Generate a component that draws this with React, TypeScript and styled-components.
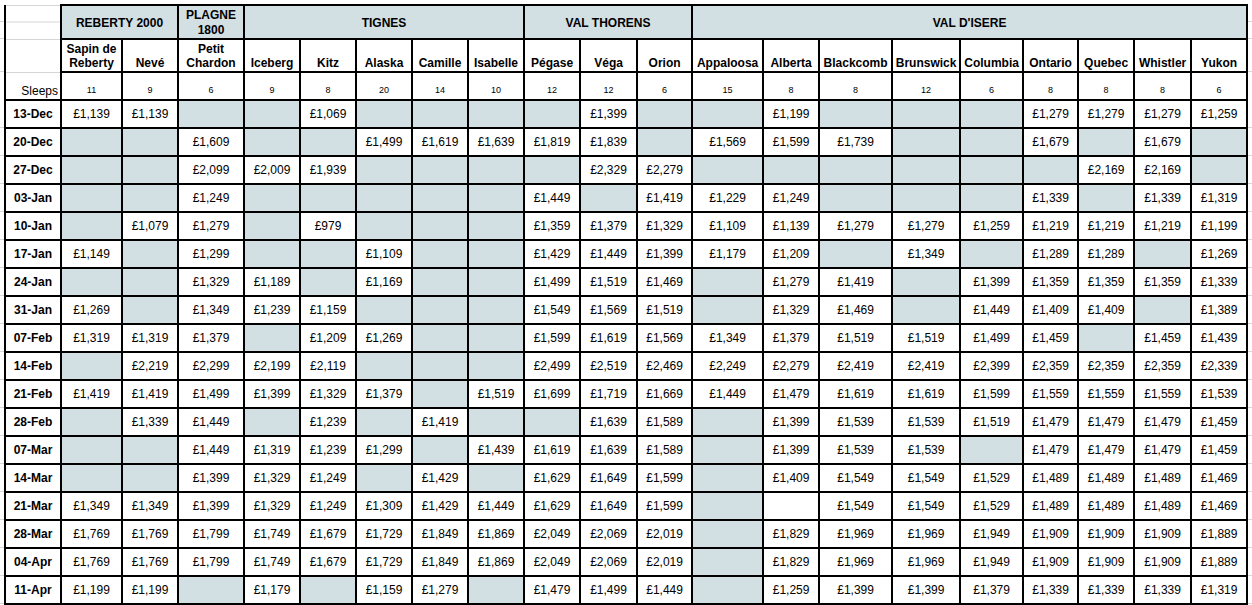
import React from "react";
import styled, { createGlobalStyle } from "styled-components";

const FILL = "#d2dfe3";
const GRID = "#d6d6d6";

const GlobalStyle = createGlobalStyle`
  html, body {
    margin: 0;
    padding: 0;
    background: #fff;
  }
  body {
    font-family: "Liberation Sans", Arial, sans-serif;
    color: #000;
  }
`;

interface Group {
  name: string;
  span: number;
}

interface Chalet {
  name: string;
  sleeps: number;
}

const groups: Group[] = [
  { name: "REBERTY 2000", span: 2 },
  { name: "PLAGNE\n1800", span: 1 },
  { name: "TIGNES", span: 5 },
  { name: "VAL THORENS", span: 3 },
  { name: "VAL D'ISERE", span: 9 },
];

const chalets: Chalet[] = [
  { name: "Sapin de\nReberty", sleeps: 11 },
  { name: "Nevé", sleeps: 9 },
  { name: "Petit\nChardon", sleeps: 6 },
  { name: "Iceberg", sleeps: 9 },
  { name: "Kitz", sleeps: 8 },
  { name: "Alaska", sleeps: 20 },
  { name: "Camille", sleeps: 14 },
  { name: "Isabelle", sleeps: 10 },
  { name: "Pégase", sleeps: 12 },
  { name: "Véga", sleeps: 12 },
  { name: "Orion", sleeps: 6 },
  { name: "Appaloosa", sleeps: 15 },
  { name: "Alberta", sleeps: 8 },
  { name: "Blackcomb", sleeps: 8 },
  { name: "Brunswick", sleeps: 12 },
  { name: "Columbia", sleeps: 6 },
  { name: "Ontario", sleeps: 8 },
  { name: "Quebec", sleeps: 8 },
  { name: "Whistler", sleeps: 8 },
  { name: "Yukon", sleeps: 6 },
];

// width of each column, date column first
const widths = [56, 61, 56, 66, 56, 56, 56, 56, 56, 56, 57, 55, 71, 56, 73, 68, 63, 55, 56, 57, 56];

// 0 = not available (shaded), -1 = blank cell left white
const weeks: [string, number[]][] = [
  ["13-Dec", [1139, 1139, 0, 0, 1069, 0, 0, 0, 0, 1399, 0, 0, 1199, 0, 0, 0, 1279, 1279, 1279, 1259]],
  ["20-Dec", [0, 0, 1609, 0, 0, 1499, 1619, 1639, 1819, 1839, 0, 1569, 1599, 1739, 0, 0, 1679, 0, 1679, 0]],
  ["27-Dec", [0, 0, 2099, 2009, 1939, 0, 0, 0, 0, 2329, 2279, 0, 0, 0, 0, 0, 0, 2169, 2169, 0]],
  ["03-Jan", [0, 0, 1249, 0, 0, 0, 0, 0, 1449, 0, 1419, 1229, 1249, 0, 0, 0, 1339, 0, 1339, 1319]],
  ["10-Jan", [0, 1079, 1279, 0, 979, 0, 0, 0, 1359, 1379, 1329, 1109, 1139, 1279, 1279, 1259, 1219, 1219, 1219, 1199]],
  ["17-Jan", [1149, 0, 1299, 0, 0, 1109, 0, 0, 1429, 1449, 1399, 1179, 1209, 0, 1349, 0, 1289, 1289, 0, 1269]],
  ["24-Jan", [0, 0, 1329, 1189, 0, 1169, 0, 0, 1499, 1519, 1469, 0, 1279, 1419, 0, 1399, 1359, 1359, 1359, 1339]],
  ["31-Jan", [1269, 0, 1349, 1239, 1159, 0, 0, 0, 1549, 1569, 1519, 0, 1329, 1469, 0, 1449, 1409, 1409, 0, 1389]],
  ["07-Feb", [1319, 1319, 1379, 0, 1209, 1269, 0, 0, 1599, 1619, 1569, 1349, 1379, 1519, 1519, 1499, 1459, 0, 1459, 1439]],
  ["14-Feb", [0, 2219, 2299, 2199, 2119, 0, 0, 0, 2499, 2519, 2469, 2249, 2279, 2419, 2419, 2399, 2359, 2359, 2359, 2339]],
  ["21-Feb", [1419, 1419, 1499, 1399, 1329, 1379, 0, 1519, 1699, 1719, 1669, 1449, 1479, 1619, 1619, 1599, 1559, 1559, 1559, 1539]],
  ["28-Feb", [0, 1339, 1449, 0, 1239, 0, 1419, 0, 0, 1639, 1589, 0, 1399, 1539, 1539, 1519, 1479, 1479, 1479, 1459]],
  ["07-Mar", [0, 0, 1449, 1319, 1239, 1299, 0, 1439, 1619, 1639, 1589, 0, 1399, 1539, 1539, 0, 1479, 1479, 1479, 1459]],
  ["14-Mar", [0, 0, 1399, 1329, 1249, 0, 1429, 0, 1629, 1649, 1599, 0, 1409, 1549, 1549, 1529, 1489, 1489, 1489, 1469]],
  ["21-Mar", [1349, 1349, 1399, 1329, 1249, 1309, 1429, 1449, 1629, 1649, 1599, 0, -1, 1549, 1549, 1529, 1489, 1489, 1489, 1469]],
  ["28-Mar", [1769, 1769, 1799, 1749, 1679, 1729, 1849, 1869, 2049, 2069, 2019, 0, 1829, 1969, 1969, 1949, 1909, 1909, 1909, 1889]],
  ["04-Apr", [1769, 1769, 1799, 1749, 1679, 1729, 1849, 1869, 2049, 2069, 2019, 0, 1829, 1969, 1969, 1949, 1909, 1909, 1909, 1889]],
  ["11-Apr", [1199, 1199, 0, 1179, 0, 1159, 1279, 0, 1479, 1499, 1449, 0, 1259, 1399, 1399, 1379, 1339, 1339, 1339, 1319]],
];

const price = (n: number) => (n > 0 ? "£" + n.toLocaleString("en-GB") : "");

// excel gridlines peeking out round the table edges
const Sheet = styled.div`
  box-sizing: border-box;
  width: 1252px;
  height: 605px;
  overflow: hidden;
  padding: 4px 0 0 4px;
  background-color: #fff;
  background-image:
    linear-gradient(to bottom, transparent 21px, ${GRID} 21px 22px, transparent 22px 38px,
      ${GRID} 38px 39px, transparent 39px 71px, ${GRID} 71px 72px, transparent 72px),
    repeating-linear-gradient(to bottom, transparent 0 27px, ${GRID} 27px 28px);
  background-size: 100% 100px, 100% 504px;
  background-position: 0 0, 0 100px;
  background-repeat: no-repeat;
`;

const Table = styled.table`
  border-collapse: collapse;
  table-layout: fixed;
  width: 1242px;
  font-size: 12px;
  line-height: 14px;
  background: #fff;
`;

const Row = styled.tr<{ $h: number }>`
  height: ${({ $h }) => $h}px;
`;

const Corner = styled.td<{ $split?: boolean }>`
  padding: 0;
  border-left: 2px solid #000;
  border-right: 2px solid #000;
  border-top: 1px solid ${GRID};
  border-bottom: 1px solid ${GRID};
  background: ${({ $split }) =>
    $split
      ? `linear-gradient(to bottom, #fff 16px, ${GRID} 16px 17px, #fff 17px)`
      : "#fff"};
`;

const GroupCell = styled.th`
  padding: 2px 2px 0;
  border: 2px solid #000;
  background: ${FILL};
  font-weight: bold;
  font-size: 12px;
  line-height: 15px;
  text-align: center;
  vertical-align: middle;
  white-space: pre-line;
`;

const NameCell = styled.th`
  padding: 0 1px 1px;
  border: 2px solid #000;
  background: #fff;
  font-weight: bold;
  font-size: 12px;
  line-height: 14px;
  text-align: center;
  vertical-align: bottom;
  white-space: pre-line;
`;

const SleepsLabel = styled.td`
  padding: 0 2px 1px 0;
  border-left: 2px solid #000;
  border-right: 2px solid #000;
  border-top: 1px solid ${GRID};
  border-bottom: 2px solid #000;
  font-size: 12px;
  text-align: right;
  vertical-align: bottom;
`;

const SleepsCell = styled.td`
  padding: 0 0 2px;
  border: 2px solid #000;
  font-size: 9px;
  text-align: center;
  vertical-align: bottom;
`;

const DateCell = styled.th`
  padding: 0;
  border: 2px solid #000;
  background: #fff;
  font-weight: bold;
  font-size: 12px;
  text-align: center;
  vertical-align: middle;
`;

const PriceCell = styled.td<{ $shaded: boolean }>`
  padding: 0;
  border: 2px solid #000;
  background: ${({ $shaded }) => ($shaded ? FILL : "#fff")};
  font-size: 12px;
  text-align: center;
  vertical-align: middle;
`;

const App: React.FC = () => {
  return (
    <Sheet>
      <GlobalStyle />
      <Table>
        <colgroup>
          {widths.map((w, i) => (
            <col key={i} style={{ width: w }} />
          ))}
        </colgroup>
        <tbody>
          <Row $h={34}>
            <Corner $split />
            {groups.map((g) => (
              <GroupCell key={g.name} colSpan={g.span}>
                {g.name}
              </GroupCell>
            ))}
          </Row>
          <Row $h={33}>
            <Corner />
            {chalets.map((c) => (
              <NameCell key={c.name}>{c.name}</NameCell>
            ))}
          </Row>
          <Row $h={28}>
            <SleepsLabel>Sleeps</SleepsLabel>
            {chalets.map((c) => (
              <SleepsCell key={c.name}>{c.sleeps}</SleepsCell>
            ))}
          </Row>
          {weeks.map(([date, prices]) => (
            <Row $h={28} key={date}>
              <DateCell>{date}</DateCell>
              {prices.map((p, i) => (
                <PriceCell key={i} $shaded={p === 0}>
                  {price(p)}
                </PriceCell>
              ))}
            </Row>
          ))}
        </tbody>
      </Table>
    </Sheet>
  );
};

export default App;
